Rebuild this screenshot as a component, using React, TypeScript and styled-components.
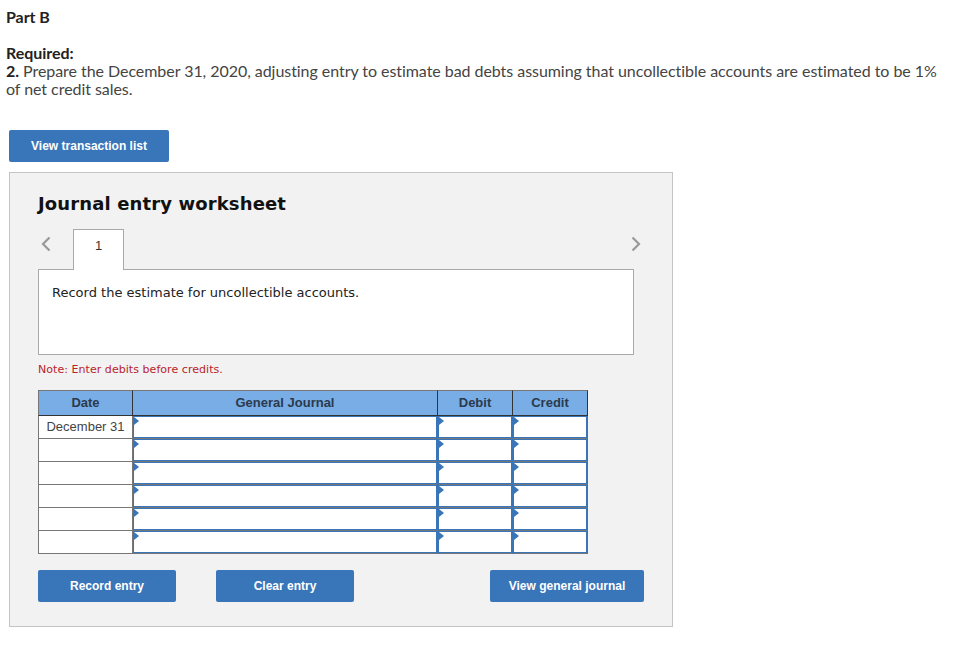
import React from "react";
import styled, { createGlobalStyle } from "styled-components";

const GlobalStyle = createGlobalStyle`
    html, body {
        margin: 0;
        padding: 0;
        background: #fff;
    }
`;

const Page = styled.div`
    width: 957px;
    height: 647px;
    overflow: hidden;
    padding-top: 8px;
    box-sizing: border-box;
    font-family: "Lato", "Liberation Sans", sans-serif;
    color: #444;
`;

const Question = styled.div`
    padding-left: 6px;
    width: 940px;
    font-size: 16px;
    letter-spacing: -0.05px;
    line-height: 18px;
`;

const PartTitle = styled.div`
    font-weight: 700;
    color: #222;
    margin-bottom: 18px;
`;

const Required = styled.div`
    font-weight: 700;
    color: #222;
`;

const Lead = styled.b`
    color: #222;
`;

const Button = styled.button<{ $width: number }>`
    width: ${(p) => p.$width}px;
    height: 32px;
    padding: 0;
    border: none;
    border-radius: 2px;
    background: #3975b9;
    color: #fff;
    font-family: "Liberation Sans", Arial, sans-serif;
    font-size: 12px;
    font-weight: 700;
`;

const ListButtonRow = styled.div`
    margin: 32px 0 10px 9px;
    display: flex;
`;

const Panel = styled.div`
    margin-left: 9px;
    width: 664px;
    height: 455px;
    box-sizing: border-box;
    padding: 19px 28px 0;
    background: #f2f2f2;
    border: 1px solid #c4c4c4;
`;

const Heading = styled.h2`
    margin: 0;
    height: 37px;
    font-family: "DejaVu Sans", Verdana, sans-serif;
    font-size: 18px;
    letter-spacing: 0.13px;
    line-height: 23px;
    font-weight: 700;
    color: #111;
`;

const TabRow = styled.div`
    width: 603px;
    height: 40px;
    display: flex;
    align-items: flex-start;
`;

const Arrow = styled.div`
    width: 35px;
    padding: 7px 0 0 3px;
    box-sizing: border-box;
    height: 24px;
    color: #999;
`;

const NextArrow = styled(Arrow)`
    margin-left: auto;
    width: 10px;
    padding-left: 0;
`;

const Tab = styled.div`
    width: 51px;
    height: 41px;
    box-sizing: border-box;
    position: relative;
    z-index: 1;
    border: 1px solid #a9a9a9;
    border-bottom: none;
    background: #fff;
    text-align: center;
    font-family: "Liberation Sans", Arial, sans-serif;
    font-size: 13px;
    line-height: 32px;
    color: #333;
`;

const Description = styled.div`
    width: 596px;
    height: 86px;
    box-sizing: border-box;
    padding: 15px 13px;
    background: #fff;
    border: 1px solid #a9a9a9;
    font-family: "DejaVu Sans", Verdana, sans-serif;
    font-size: 13px;
    line-height: 16px;
    color: #222;
`;

const Note = styled.div`
    margin-top: 8px;
    height: 27px;
    font-family: "DejaVu Sans", Verdana, sans-serif;
    font-size: 11px;
    letter-spacing: 0.05px;
    line-height: 14px;
    color: #b8242a;
`;

const Sheet = styled.div`
    width: 550px;
    display: grid;
    grid-template-columns: 95px 305px 75px 75px;
    font-family: "Liberation Sans", Arial, sans-serif;
    font-size: 13px;
`;

const HeadCell = styled.div`
    height: 26px;
    box-sizing: border-box;
    background: #78ade6;
    border-top: 1px solid #777;
    border-bottom: 1px solid #333;
    border-right: 1px solid #333;
    text-align: center;
    line-height: 23px;
    font-weight: 700;
    color: #2b3a4c;

    &:first-child {
        border-left: 1px solid #777;
    }
`;

const DateCell = styled.div`
    height: 23px;
    box-sizing: border-box;
    background: #fff;
    border-left: 1px solid #777;
    border-right: 1px solid #777;
    border-bottom: 1px solid #777;
    text-align: center;
    line-height: 21px;
    color: #444;
`;

const EntryCell = styled.div`
    height: 23px;
    box-sizing: border-box;
    position: relative;
    background: #fff;
    border-left: 1px solid #3975b9;
    border-right: 2px solid #3975b9;
    border-bottom: 1px solid #777;
    box-shadow: inset 0 1px 0 #3975b9, inset 0 -1px 0 #3975b9;

    &::before {
        content: "";
        position: absolute;
        left: 0;
        top: 1px;
        border-left: 5px solid #3975b9;
        border-top: 4px solid transparent;
        border-bottom: 4px solid transparent;
    }
`;

const Actions = styled.div`
    width: 606px;
    margin-top: 16px;
    display: flex;
`;

const MiddleButton = styled(Button)`
    margin-left: 40px;
    margin-right: auto;
`;

const columns = ["Date", "General Journal", "Debit", "Credit"];
const rows = ["December 31", "", "", "", "", ""];

const Chevron: React.FC<{ flip?: boolean }> = ({ flip }) => (
    <svg width="10" height="16" viewBox="0 0 10 16" fill="none">
        <path
            d={flip ? "M1.5 1.5L8 8l-6.5 6.5" : "M8.5 1.5L2 8l6.5 6.5"}
            stroke="currentColor"
            strokeWidth="2.2"
        />
    </svg>
);

const App: React.FC = () => {
    return (
        <Page>
            <GlobalStyle />
            <Question>
                <PartTitle>Part B</PartTitle>
                <Required>Required:</Required>
                <div>
                    <Lead>2.</Lead> Prepare the December 31, 2020, adjusting entry to estimate bad
                    debts assuming that uncollectible accounts are estimated to be 1%
                    <br />
                    of net credit sales.
                </div>
            </Question>
            <ListButtonRow>
                <Button $width={160}>View transaction list</Button>
            </ListButtonRow>
            <Panel>
                <Heading>Journal entry worksheet</Heading>
                <TabRow>
                    <Arrow>
                        <Chevron />
                    </Arrow>
                    <Tab>1</Tab>
                    <NextArrow>
                        <Chevron flip />
                    </NextArrow>
                </TabRow>
                <Description>Record the estimate for uncollectible accounts.</Description>
                <Note>Note: Enter debits before credits.</Note>
                <Sheet>
                    {columns.map((c) => (
                        <HeadCell key={c}>{c}</HeadCell>
                    ))}
                    {rows.map((date, i) => (
                        <React.Fragment key={i}>
                            <DateCell>{date}</DateCell>
                            <EntryCell />
                            <EntryCell />
                            <EntryCell />
                        </React.Fragment>
                    ))}
                </Sheet>
                <Actions>
                    <Button $width={138}>Record entry</Button>
                    <MiddleButton $width={138}>Clear entry</MiddleButton>
                    <Button $width={154}>View general journal</Button>
                </Actions>
            </Panel>
        </Page>
    );
};

export default App;
